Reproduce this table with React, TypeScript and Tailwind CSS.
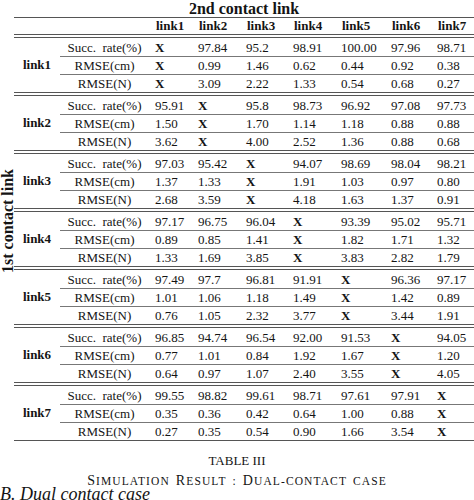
import React from 'react';

type Cell = string;

const groups: { name: string; rows: Cell[][] }[] = [
  {
    name: 'link1',
    rows: [
      ['X', '97.84', '95.2', '98.91', '100.00', '97.96', '98.71'],
      ['X', '0.99', '1.46', '0.62', '0.44', '0.92', '0.38'],
      ['X', '3.09', '2.22', '1.33', '0.54', '0.68', '0.27'],
    ],
  },
  {
    name: 'link2',
    rows: [
      ['95.91', 'X', '95.8', '98.73', '96.92', '97.08', '97.73'],
      ['1.50', 'X', '1.70', '1.14', '1.18', '0.88', '0.88'],
      ['3.62', 'X', '4.00', '2.52', '1.36', '0.88', '0.68'],
    ],
  },
  {
    name: 'link3',
    rows: [
      ['97.03', '95.42', 'X', '94.07', '98.69', '98.04', '98.21'],
      ['1.37', '1.33', 'X', '1.91', '1.03', '0.97', '0.80'],
      ['2.68', '3.59', 'X', '4.18', '1.63', '1.37', '0.91'],
    ],
  },
  {
    name: 'link4',
    rows: [
      ['97.17', '96.75', '96.04', 'X', '93.39', '95.02', '95.71'],
      ['0.89', '0.85', '1.41', 'X', '1.82', '1.71', '1.32'],
      ['1.33', '1.69', '3.85', 'X', '3.83', '2.82', '1.79'],
    ],
  },
  {
    name: 'link5',
    rows: [
      ['97.49', '97.7', '96.81', '91.91', 'X', '96.36', '97.17'],
      ['1.01', '1.06', '1.18', '1.49', 'X', '1.42', '0.89'],
      ['0.76', '1.05', '2.32', '3.77', 'X', '3.44', '1.91'],
    ],
  },
  {
    name: 'link6',
    rows: [
      ['96.85', '94.74', '96.54', '92.00', '91.53', 'X', '94.05'],
      ['0.77', '1.01', '0.84', '1.92', '1.67', 'X', '1.20'],
      ['0.64', '0.97', '1.07', '2.40', '3.55', 'X', '4.05'],
    ],
  },
  {
    name: 'link7',
    rows: [
      ['99.55', '98.82', '99.61', '98.71', '97.61', '97.91', 'X'],
      ['0.35', '0.36', '0.42', '0.64', '1.00', '0.88', 'X'],
      ['0.27', '0.35', '0.54', '0.90', '1.66', '3.54', 'X'],
    ],
  },
];

const metrics = ['Succ.\u00a0 rate(%)', 'RMSE(cm)', 'RMSE(N)'];
const links = ['link1', 'link2', 'link3', 'link4', 'link5', 'link6', 'link7'];

// caption words in small caps: first letter big, rest small
const captionWords = ['Simulation', 'Result', ':', 'Dual-contact', 'case'];

function DoubleRule() {
  return <div className="h-[4px] border-y border-[#555]" />;
}

function DataRow({ metric, cells, first }: { metric: string; cells: Cell[]; first: boolean }) {
  return (
    <div
      className={`grid h-[18px] grid-cols-[89px_43px_48px_47px_48px_50px_46px_43px] items-center leading-[17px] ${
        first ? '' : 'border-t border-[#777]'
      }`}
    >
      <div className="text-center">{metric}</div>
      {cells.map((c, i) => (
        <div key={i} className={`pl-[6px] ${c === 'X' ? 'font-bold' : ''}`}>
          {c}
        </div>
      ))}
    </div>
  );
}

function SmallCapsWord({ word }: { word: string }) {
  const isCapWord = word === 'Simulation' || word === 'Result' || word === 'Dual-contact';
  if (!isCapWord) {
    return <span className="text-[11.5px]">{word.toUpperCase()}</span>;
  }
  return (
    <span>
      <span className="text-[14px]">{word[0]}</span>
      <span className="text-[11.5px]">{word.slice(1).toUpperCase()}</span>
    </span>
  );
}

export default function App() {
  return (
    <div className="w-[474px] h-[500px] overflow-hidden bg-white text-[#141414] font-['Liberation_Serif',serif] text-[13px]">
      <div className="flex">
        <div className="w-[14px] flex items-center justify-end">
          <span className="[writing-mode:vertical-rl] rotate-180 font-bold text-[16px] leading-[13px] whitespace-nowrap">
            1st contact link
          </span>
        </div>

        <div className="w-[460px]">
          <div className="h-[17px] text-center font-bold text-[16px] leading-[17px]">2nd contact link</div>
          <div className="border-t border-[#555]" />
          <div className="grid h-[16px] grid-cols-[46px_89px_43px_48px_47px_48px_50px_46px_43px] items-center font-bold leading-[16px]">
            <div />
            <div />
            {links.map((l) => (
              <div key={l} className="pl-[7px]">
                {l}
              </div>
            ))}
          </div>
          <DoubleRule />

          {groups.map((g, gi) => (
            <div key={g.name}>
              <div className="flex">
                <div className="w-[46px] flex items-center justify-center font-bold">{g.name}</div>
                <div className="flex-1">
                  {g.rows.map((r, ri) => (
                    <DataRow key={ri} metric={metrics[ri]} cells={r} first={ri === 0} />
                  ))}
                </div>
              </div>
              {gi < groups.length - 1 ? <DoubleRule /> : <div className="border-t border-[#555]" />}
            </div>
          ))}
        </div>
      </div>

      <div className="mt-[12px] text-center leading-[16px]">TABLE III</div>
      <div className="mt-[4px] flex justify-center gap-[6px] items-baseline leading-[16px] tracking-[1.1px]">
        {captionWords.map((w) => (
          <SmallCapsWord key={w} word={w} />
        ))}
      </div>
      <div className="mt-[-4px] italic text-[18px] leading-[18px] whitespace-nowrap">B. Dual contact case</div>
    </div>
  );
}
